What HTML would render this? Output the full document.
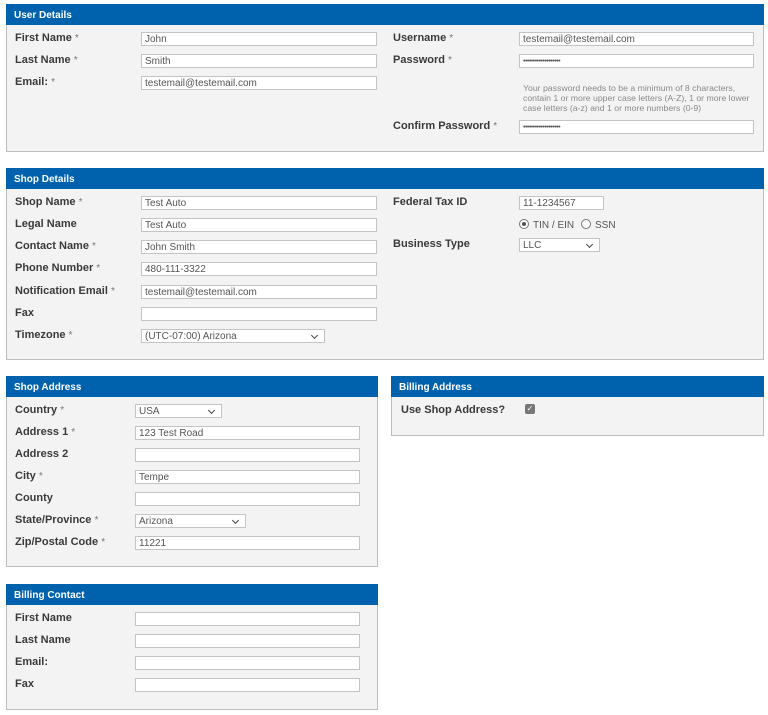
<!DOCTYPE html>
<html><head><style>
*{margin:0;padding:0;box-sizing:border-box}
body{width:768px;height:715px;background:#fff;font-family:"Liberation Sans",Arial,sans-serif;position:relative;overflow:hidden}
.p{position:absolute;background:#f3f3f3;border:1px solid #bdbdbd}
.h{position:absolute;left:-1px;right:-1px;top:-1px;height:21px;background:#0062ad;color:#fff;font-weight:bold;font-size:10px;padding:6px 0 0 8px}
.l{position:absolute;font-size:11px;font-weight:bold;color:#3a3a3a;top:0}
.l i{font-style:normal;font-weight:normal;color:#777;font-size:10px}
.i{position:absolute;height:14px;background:#fff;border:1px solid #c4c4c4;font-size:10px;color:#555;padding:1px 0 0 3px;line-height:11px}
.s::after{content:"";position:absolute;right:7px;top:3px;width:4px;height:4px;border-right:1.3px solid #444;border-bottom:1.3px solid #444;transform:rotate(45deg)}
.t{position:absolute;font-size:8.7px;color:#8a8a8a;line-height:10px}
</style></head><body>

<div class="p" style="left:6px;top:4px;width:758px;height:148px"><div class="h">User Details</div></div>
<div class="l" style="left:15px;top:32px">First Name <i>*</i></div>
<div class="i" style="left:141px;top:32px;width:236px">John</div>
<div class="l" style="left:15px;top:54px">Last Name <i>*</i></div>
<div class="i" style="left:141px;top:54px;width:236px">Smith</div>
<div class="l" style="left:15px;top:76px">Email: <i>*</i></div>
<div class="i" style="left:141px;top:76px;width:236px">testemail@testemail.com</div>
<div class="l" style="left:393px;top:32px">Username <i>*</i></div>
<div class="i" style="left:519px;top:32px;width:235px">testemail@testemail.com</div>
<div class="l" style="left:393px;top:54px">Password <i>*</i></div>
<div class="i" style="left:519px;top:54px;width:235px;font-size:7px;letter-spacing:-0.5px">•••••••••••••••••••</div>
<div class="t" style="left:523px;top:83px">Your password needs to be a minimum of 8 characters,<br>contain 1 or more upper case letters (A-Z), 1 or more lower<br>case letters (a-z) and 1 or more numbers (0-9)</div>
<div class="l" style="left:393px;top:120px">Confirm Password <i>*</i></div>
<div class="i" style="left:519px;top:120px;width:235px;font-size:7px;letter-spacing:-0.5px">•••••••••••••••••••</div>

<div class="p" style="left:6px;top:168px;width:758px;height:192px"><div class="h">Shop Details</div></div>
<div class="l" style="left:15px;top:196px">Shop Name <i>*</i></div>
<div class="i" style="left:141px;top:196px;width:236px">Test Auto</div>
<div class="l" style="left:15px;top:218px">Legal Name</div>
<div class="i" style="left:141px;top:218px;width:236px">Test Auto</div>
<div class="l" style="left:15px;top:240px">Contact Name <i>*</i></div>
<div class="i" style="left:141px;top:240px;width:236px">John Smith</div>
<div class="l" style="left:15px;top:262px">Phone Number <i>*</i></div>
<div class="i" style="left:141px;top:262px;width:236px">480-111-3322</div>
<div class="l" style="left:15px;top:285px">Notification Email <i>*</i></div>
<div class="i" style="left:141px;top:285px;width:236px">testemail@testemail.com</div>
<div class="l" style="left:15px;top:307px">Fax</div>
<div class="i" style="left:141px;top:307px;width:236px"></div>
<div class="l" style="left:15px;top:329px">Timezone <i>*</i></div>
<div class="i s" style="left:141px;top:329px;width:184px">(UTC-07:00) Arizona</div>
<div class="l" style="left:393px;top:196px">Federal Tax ID</div>
<div class="i" style="left:519px;top:196px;width:85px">11-1234567</div>
<div style="position:absolute;left:519px;top:219px;width:10px;height:10px;border-radius:50%;border:1px solid #777;background:#fff"><div style="position:absolute;left:2px;top:2px;width:4px;height:4px;border-radius:50%;background:#555"></div></div>
<div style="position:absolute;left:533px;top:220px;font-size:10px;color:#555">TIN / EIN</div>
<div style="position:absolute;left:581px;top:219px;width:10px;height:10px;border-radius:50%;border:1px solid #777;background:#fff"></div>
<div style="position:absolute;left:595px;top:220px;font-size:10px;color:#555">SSN</div>
<div class="l" style="left:393px;top:238px">Business Type</div>
<div class="i s" style="left:519px;top:238px;width:81px">LLC</div>

<div class="p" style="left:6px;top:376px;width:372px;height:191px"><div class="h">Shop Address</div></div>
<div class="l" style="left:15px;top:404px">Country <i>*</i></div>
<div class="i s" style="left:135px;top:404px;width:87px">USA</div>
<div class="l" style="left:15px;top:426px">Address 1 <i>*</i></div>
<div class="i" style="left:135px;top:426px;width:225px">123 Test Road</div>
<div class="l" style="left:15px;top:448px">Address 2</div>
<div class="i" style="left:135px;top:448px;width:225px"></div>
<div class="l" style="left:15px;top:470px">City <i>*</i></div>
<div class="i" style="left:135px;top:470px;width:225px">Tempe</div>
<div class="l" style="left:15px;top:492px">County</div>
<div class="i" style="left:135px;top:492px;width:225px"></div>
<div class="l" style="left:15px;top:514px">State/Province <i>*</i></div>
<div class="i s" style="left:135px;top:514px;width:111px">Arizona</div>
<div class="l" style="left:15px;top:536px">Zip/Postal Code <i>*</i></div>
<div class="i" style="left:135px;top:536px;width:225px">11221</div>

<div class="p" style="left:391px;top:376px;width:373px;height:60px"><div class="h">Billing Address</div></div>
<div class="l" style="left:401px;top:404px">Use Shop Address?</div>
<div style="position:absolute;left:525px;top:404px;width:10px;height:10px;background:#777;border-radius:2px;color:#fff;font-size:8px;line-height:10px;text-align:center">✓</div>

<div class="p" style="left:6px;top:584px;width:372px;height:126px"><div class="h">Billing Contact</div></div>
<div class="l" style="left:15px;top:612px">First Name</div>
<div class="i" style="left:135px;top:612px;width:225px"></div>
<div class="l" style="left:15px;top:634px">Last Name</div>
<div class="i" style="left:135px;top:634px;width:225px"></div>
<div class="l" style="left:15px;top:656px">Email:</div>
<div class="i" style="left:135px;top:656px;width:225px"></div>
<div class="l" style="left:15px;top:678px">Fax</div>
<div class="i" style="left:135px;top:678px;width:225px"></div>
</body></html>
